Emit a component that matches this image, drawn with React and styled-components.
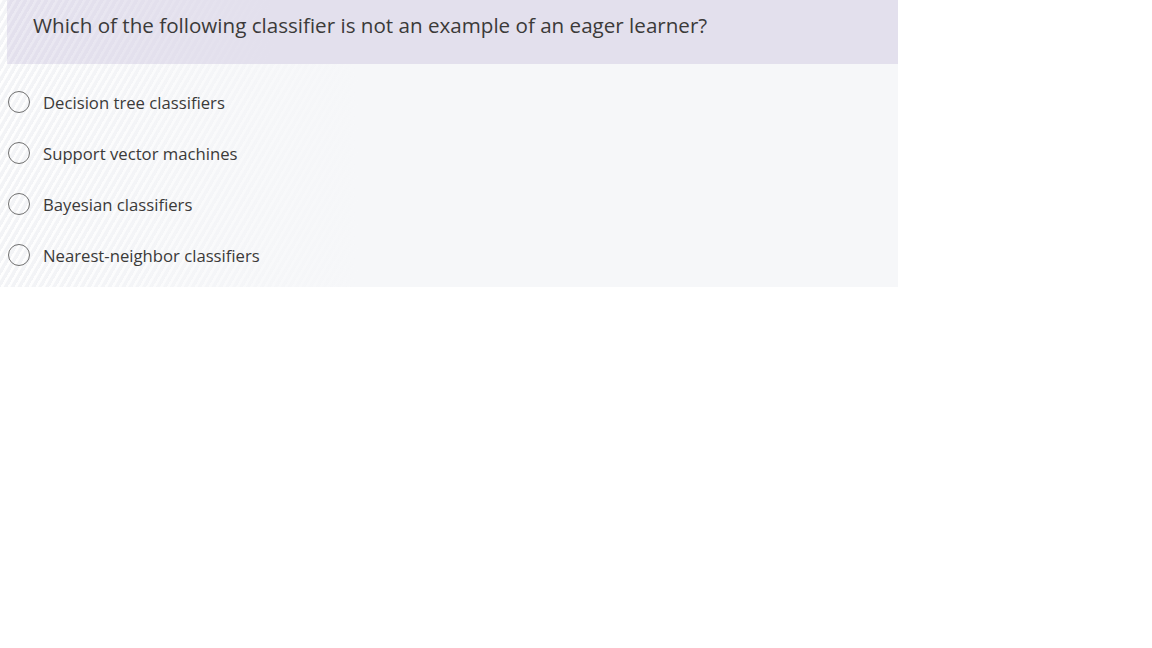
import React from "react";
import styled, { createGlobalStyle } from "styled-components";

const Global = createGlobalStyle`
  html, body { margin: 0; padding: 0; background: #ffffff; }
  body { font-family: "Open Sans", "Noto Sans", sans-serif; }
`;

const Panel = styled.div`
  width: 898px;
  height: 287px;
  background-color: #f6f7f9;
  background-image:
    linear-gradient(90deg, rgba(246,247,249,0) 0%, rgba(246,247,249,1) 40%),
    repeating-linear-gradient(120deg, rgba(255,255,255,0.9) 0px, rgba(255,255,255,0.9) 2px, rgba(240,241,244,0.6) 3px, rgba(240,241,244,0.6) 6px);
  display: flex;
  flex-direction: column;
`;

const Header = styled.div`
  margin-left: 7px;
  height: 64px;
  background-color: #e3e0ed;
  background-image:
    linear-gradient(90deg, rgba(227,224,237,0) 0%, rgba(227,224,237,1) 30%),
    repeating-linear-gradient(120deg, rgba(236,234,243,0.9) 0px, rgba(236,234,243,0.9) 2px, rgba(227,224,237,0.6) 3px, rgba(227,224,237,0.6) 6px);
  display: flex;
  align-items: center;
  padding-left: 26px;
  padding-bottom: 15px;
  box-sizing: border-box;
`;

const Question = styled.h1`
  margin: 0;
  font-family: "Open Sans", sans-serif;
  font-weight: 400;
  font-size: 20.6px;
  color: #3b3a39;
`;

const Options = styled.div`
  display: flex;
  flex-direction: column;
  padding-top: 27px;
  padding-left: 8px;
  gap: 29px;
`;

const Option = styled.label`
  display: flex;
  align-items: center;
  gap: 13px;
  height: 22px;
  cursor: pointer;
`;

const Radio = styled.span`
  width: 20px;
  height: 20px;
  border: 1.5px solid #707070;
  border-radius: 50%;
  flex: none;
`;

const OptionText = styled.span`
  font-family: "Open Sans", sans-serif;
  font-size: 16.7px;
  color: #3b3a39;
`;

const options = [
  "Decision tree classifiers",
  "Support vector machines",
  "Bayesian classifiers",
  "Nearest-neighbor classifiers",
];

export default function App() {
  return (
    <>
      <Global />
      <Panel>
        <Header>
          <Question>Which of the following classifier is not an example of an eager learner?</Question>
        </Header>
        <Options>
          {options.map((o) => (
            <Option key={o}>
              <Radio />
              <OptionText>{o}</OptionText>
            </Option>
          ))}
        </Options>
      </Panel>
    </>
  );
}
